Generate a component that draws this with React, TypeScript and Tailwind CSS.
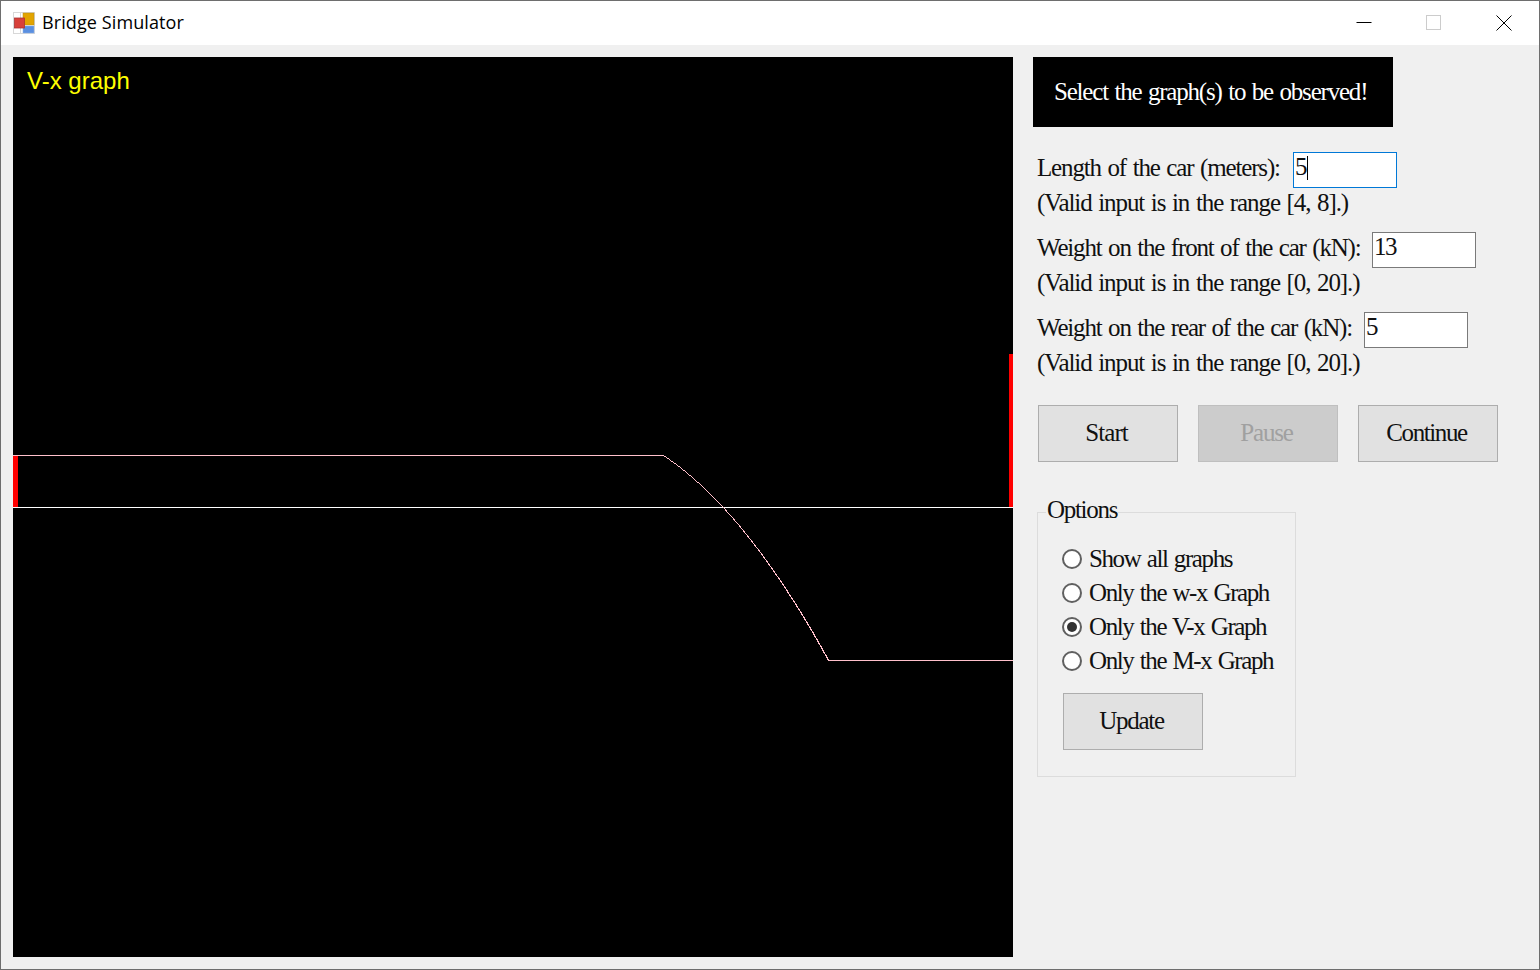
import React from "react";

const serif = "font-['Liberation_Serif','Times_New_Roman',serif]";

// Curve of the V-x graph between the two flat parts
const curve: string[] = [];
for (let x = 650; x <= 815; x += 1) {
  const t = x - 650;
  curve.push(`${x + 0.5},${Math.min(603, Math.round(398 + 0.66 * t + 0.00352 * t * t)) + 0.5}`);
}
const graphPoints = `0,398.5 ${curve.join(" ")} 1000,603.5`;

const AppIcon = () => (
  <svg width="22" height="22" viewBox="0 0 22 22" className="shrink-0">
    <rect x="0.5" y="0.5" width="21" height="21" fill="#fff" stroke="#d8d8d8" />
    <path d="M7.5 0v22M0 15.5h22" stroke="#d8d8d8" />
    <rect x="10" y="1" width="11" height="12" fill="#e2a400" stroke="#b98a10" strokeWidth="0.5" />
    <rect x="10" y="14" width="11" height="7" fill="#5a8fe0" stroke="#8fb2e8" strokeWidth="0.5" />
    <rect x="1.5" y="6" width="10" height="10" fill="#d8403a" stroke="#a33" strokeWidth="0.8" />
  </svg>
);

const TitleBar = () => (
  <div className="flex h-[44px] items-center bg-white">
    <div className="ml-[12px] flex items-center gap-[7px]">
      <AppIcon />
      <span className="mb-[2px] font-['Open_Sans',sans-serif] text-[18px] tracking-[0.1px] text-black">Bridge Simulator</span>
    </div>
    <div className="ml-auto flex h-full items-center">
      <div className="flex w-[70px] justify-center">
        <svg width="16" height="16" viewBox="0 0 16 16"><path d="M0.5 7.5h15" stroke="#000" /></svg>
      </div>
      <div className="flex w-[70px] justify-center">
        <svg width="16" height="16" viewBox="0 0 16 16"><rect x="0.5" y="0.5" width="14" height="14" fill="none" stroke="#ccc" /></svg>
      </div>
      <div className="flex w-[70px] justify-center">
        <svg width="16" height="16" viewBox="0 0 16 16"><path d="M0.5 0.5l15 15M15.5 0.5l-15 15" stroke="#000" /></svg>
      </div>
    </div>
  </div>
);

const Graph = () => (
  <div className="relative h-[900px] w-[1000px] shrink-0 bg-black pl-[14px] pt-[9px]">
    <div className="font-['Liberation_Sans',Arial,sans-serif] text-[24px] leading-[30px] text-[#ffff00]">V-x graph</div>
    <svg width="1000" height="900" viewBox="0 0 1000 900" className="absolute left-0 top-0">
      <rect x="0" y="398" width="5" height="52" fill="#ff0000" />
      <rect x="996" y="297" width="4" height="153" fill="#ff0000" />
      <path d="M0 450.5h1000" stroke="#fff" shapeRendering="crispEdges" />
      <polyline points={graphPoints} fill="none" stroke="#ffc0cb" strokeWidth="1" shapeRendering="crispEdges" />
    </svg>
  </div>
);

interface FieldProps {
  label: string;
  hint: string;
  value: string;
  labelClass: string;
  focused?: boolean;
}

const Field: React.FC<FieldProps> = ({ label, hint, value, labelClass, focused }) => (
  <div className="mb-[14px] pl-[4px]">
    <div className="flex h-[36px]">
      <div className={`${labelClass} h-[32px] text-[25px] leading-[32px] text-[#111] whitespace-nowrap`}>{label}</div>
      <div
        className={
          focused
            ? "flex h-[36px] w-[104px] border border-[#0078d7] bg-white pl-[2px] text-[25px] leading-[28px] text-[#111]"
            : "flex h-[36px] w-[104px] border border-[#7a7a7a] bg-white pl-[2px] text-[25px] leading-[28px] text-[#111]"
        }
      >
        <span className="-ml-[1px] tracking-[-1.5px]">{value}</span>
        {focused && <span className="ml-[1px] mt-[3px] h-[24px] w-[1px] bg-black" />}
      </div>
    </div>
    <div className="h-[30px] text-[25px] leading-[30px] tracking-[-1.09px] text-[#111] whitespace-nowrap">{hint}</div>
  </div>
);

const ActionButton: React.FC<{ label: string; trackClass: string; disabled?: boolean }> = ({ label, trackClass, disabled }) => (
  <div
    className={
      disabled
        ? `flex h-[57px] w-[140px] items-center justify-center border border-[#bfbfbf] bg-[#cccccc] pb-[2px] pr-[3px] text-[25px] text-[#a0a0a0] ${trackClass}`
        : `flex h-[57px] w-[140px] items-center justify-center border border-[#adadad] bg-[#e1e1e1] pb-[2px] pr-[3px] text-[25px] text-[#111] ${trackClass}`
    }
  >
    {label}
  </div>
);

const Radio: React.FC<{ label: string; checked?: boolean }> = ({ label, checked }) => (
  <div className="flex h-[34px] items-center gap-[7px]">
    <div className="flex h-[20px] w-[20px] items-center justify-center rounded-full border-2 border-[#606060] bg-white">
      {checked && <div className="h-[10px] w-[10px] rounded-full bg-[#333]" />}
    </div>
    <span className="text-[25px] tracking-[-1.4px] text-[#111] whitespace-nowrap">{label}</span>
  </div>
);

const SidePanel = () => (
  <div className={`ml-[20px] flex flex-col items-start [word-spacing:1.5px] ${serif}`}>
    <div className="mb-[25px] flex h-[70px] w-[360px] items-center bg-black pl-[21px] text-[25px] tracking-[-1.2px] text-white whitespace-nowrap">
      Select the graph(s) to be observed!
    </div>
    <Field label="Length of the car (meters):" hint="(Valid input is in the range [4, 8].)" value="5" labelClass="w-[256px] tracking-[-1.15px]" focused />
    <Field label="Weight on the front of the car (kN):" hint="(Valid input is in the range [0, 20].)" value="13" labelClass="w-[335px] tracking-[-1.18px]" />
    <Field label="Weight on the rear of the car (kN):" hint="(Valid input is in the range [0, 20].)" value="5" labelClass="w-[327px] tracking-[-1.18px]" />
    <div className="ml-[5px] mt-[13px] flex gap-[20px]">
      <ActionButton label="Start" trackClass="tracking-[-0.9px]" />
      <ActionButton label="Pause" trackClass="tracking-[-1.2px]" disabled />
      <ActionButton label="Continue" trackClass="tracking-[-1.4px]" />
    </div>
    <fieldset className="ml-[4px] mt-[36px] h-[279px] w-[259px] border border-[#dcdcdc]">
      <legend className="ml-[8px] px-[1px] pb-[4px] text-[25px] leading-[24px] tracking-[-1.3px] text-[#111]">Options</legend>
      <div className="pl-[24px] pt-[16px]">
        <Radio label="Show all graphs" />
        <Radio label="Only the w-x Graph" />
        <Radio label="Only the V-x Graph" checked />
        <Radio label="Only the M-x Graph" />
        <div className="ml-[1px] mt-[15px]">
          <ActionButton label="Update" trackClass="tracking-[-1.3px]" />
        </div>
      </div>
    </fieldset>
  </div>
);

export default function App() {
  return (
    <div className="flex h-[970px] w-[1540px] flex-col overflow-hidden border border-[#6e6e6e] bg-[#f0f0f0]">
      <TitleBar />
      <div className="flex pl-[12px] pt-[12px]">
        <Graph />
        <SidePanel />
      </div>
    </div>
  );
}
